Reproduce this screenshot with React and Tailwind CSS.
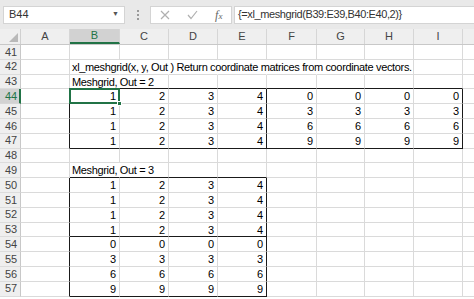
import React from 'react';

const cols = ['A', 'B', 'C', 'D', 'E', 'F', 'G', 'H', 'I', 'J'];
const widths = ['w-[49px]', 'w-[50px]', 'w-[49px]', 'w-[49px]', 'w-[49px]', 'w-[50px]', 'w-[48px]', 'w-[49px]', 'w-[49px]', 'w-[49px]'];

const rows = [];
for (let r = 41; r <= 57; r++) rows.push(r);

// cell values: [row][colIndex]
const values = {
  44: [null, 1, 2, 3, 4, 0, 0, 0, 0],
  45: [null, 1, 2, 3, 4, 3, 3, 3, 3],
  46: [null, 1, 2, 3, 4, 6, 6, 6, 6],
  47: [null, 1, 2, 3, 4, 9, 9, 9, 9],
  50: [null, 1, 2, 3, 4],
  51: [null, 1, 2, 3, 4],
  52: [null, 1, 2, 3, 4],
  53: [null, 1, 2, 3, 4],
  54: [null, 0, 0, 0, 0],
  55: [null, 3, 3, 3, 3],
  56: [null, 6, 6, 6, 6],
  57: [null, 9, 9, 9, 9],
};

const texts = {
  42: 'xl_meshgrid(x, y, Out ) Return coordinate matrices from coordinate vectors.',
  43: 'Meshgrid, Out = 2',
  49: 'Meshgrid, Out = 3',
};

function rightKind(r, c) {
  // dark borders of the two blocks
  if (r >= 44 && r <= 47 && (c === 0 || c === 4 || c === 8)) return 'dark';
  if (r >= 50 && r <= 57 && (c === 0 || c === 4)) return 'dark';
  // overflowing text hides gridlines
  if (r === 42 && c >= 1 && c <= 6) return 'none';
  if ((r === 43 || r === 49) && c === 1) return 'none';
  return 'grid';
}

function bottomKind(r, c) {
  if ((r === 43 || r === 47) && c >= 1 && c <= 8) return 'dark';
  if ((r === 49 || r === 53 || r === 57) && c >= 1 && c <= 4) return 'dark';
  return 'grid';
}

const rightCls = {
  dark: 'border-r-[#1a1a1a]',
  grid: 'border-r-[#dadada]',
  none: 'border-r-transparent',
};
const bottomCls = {
  dark: 'border-b-[#1a1a1a]',
  grid: 'border-b-[#dadada]',
};

function Cell({ r, c }) {
  const v = values[r] ? values[r][c] : null;
  const t = c === 1 ? texts[r] : null;
  const selected = r === 44 && c === 1;
  return (
    <div
      className={`relative h-full shrink-0 border-r border-b ${widths[c]} ${rightCls[rightKind(r, c)]} ${bottomCls[bottomKind(r, c)]}`}
    >
      {t && (
        <span className="absolute left-[2px] top-0 z-10 whitespace-nowrap leading-[14px] tracking-[-0.35px] text-black">{t}</span>
      )}
      {v !== null && v !== undefined && (
        <span className="absolute right-[3px] top-0 leading-[14px] text-black">{v}</span>
      )}
      {selected && (
        <div className="absolute -left-[1px] -top-[1px] -right-[1px] -bottom-[1px] z-20 border-2 border-[#217346]">
          <div className="absolute -right-[4px] -bottom-[4px] h-[5px] w-[5px] border border-white bg-[#217346]" />
        </div>
      )}
    </div>
  );
}

export default function App() {
  return (
    <div className="h-[299px] w-[474px] overflow-hidden bg-white font-['Liberation_Sans',sans-serif] text-[11px]">
      {/* formula bar */}
      <div className="flex h-[29px] items-center bg-[#e9e9e9] pl-[3px]">
        <div className="flex h-[18px] w-[122px] items-center justify-between border border-[#d4d4d4] bg-white px-[5px] text-[11px] text-[#333]">
          <span>B44</span>
          <span className="text-[7px] text-[#555]">▼</span>
        </div>
        <div className="flex w-[25px] flex-col items-center gap-[2px]">
          <div className="h-[2px] w-[2px] bg-[#9a9a9a]" />
          <div className="h-[2px] w-[2px] bg-[#9a9a9a]" />
          <div className="h-[2px] w-[2px] bg-[#9a9a9a]" />
        </div>
        <div className="flex h-[18px] w-[82px] items-center justify-around border border-[#d4d4d4] bg-white text-[#a8a8a8]">
          <svg width="10" height="10" viewBox="0 0 10 10">
            <path d="M1 1 L9 9 M9 1 L1 9" stroke="#b0b0b0" strokeWidth="1.2" fill="none" />
          </svg>
          <svg width="11" height="10" viewBox="0 0 11 10">
            <path d="M1 5 L4 8.5 L10 1" stroke="#b0b0b0" strokeWidth="1.2" fill="none" />
          </svg>
          <span className="font-['Liberation_Serif',serif] text-[12px] italic text-[#666]">
            f<span className="text-[9px]">x</span>
          </span>
        </div>
        <div className="ml-[2px] flex h-[18px] flex-1 items-center border border-r-0 border-[#d4d4d4] bg-white pl-[3px] text-[11px] tracking-[-0.4px] text-[#333]">
          {'{=xl_meshgrid(B39:E39,B40:E40,2)}'}
        </div>
      </div>

      {/* column headers */}
      <div className="flex h-[16px] border-b border-[#c8c8c8] bg-[#efefef] text-[#444]">
        <div className="relative h-full w-[21px] shrink-0 border-r border-[#d0d0d0]">
          <svg className="absolute bottom-[2px] right-[2px]" width="9" height="9" viewBox="0 0 9 9">
            <path d="M9 0 L9 9 L0 9 Z" fill="#b9b9b9" />
          </svg>
        </div>
        {cols.map((col, i) => (
          <div
            key={col}
            className={`flex h-full shrink-0 items-center justify-center border-r border-[#d6d6d6] ${widths[i]} ${
              col === 'B' ? 'border-b-2 border-b-[#217346] bg-[#d2d2d2] text-[#217346]' : ''
            }`}
          >
            {col === 'J' ? '' : col}
          </div>
        ))}
      </div>

      {/* rows */}
      {rows.map((r) => (
        <div key={r} className="flex h-[14.8px]">
          <div
            className={`flex h-full w-[21px] shrink-0 items-center border-b border-r pl-[5px] text-[#444] ${
              r === 44
                ? 'border-b-[#d6d6d6] border-r-2 border-r-[#217346] bg-[#d2d2d2] text-[#217346]'
                : 'border-b-[#dcdcdc] border-r-[#c8c8c8] bg-[#efefef]'
            }`}
          >
            {r}
          </div>
          {cols.map((col, c) => (
            <Cell key={col} r={r} c={c} />
          ))}
        </div>
      ))}
    </div>
  );
}
